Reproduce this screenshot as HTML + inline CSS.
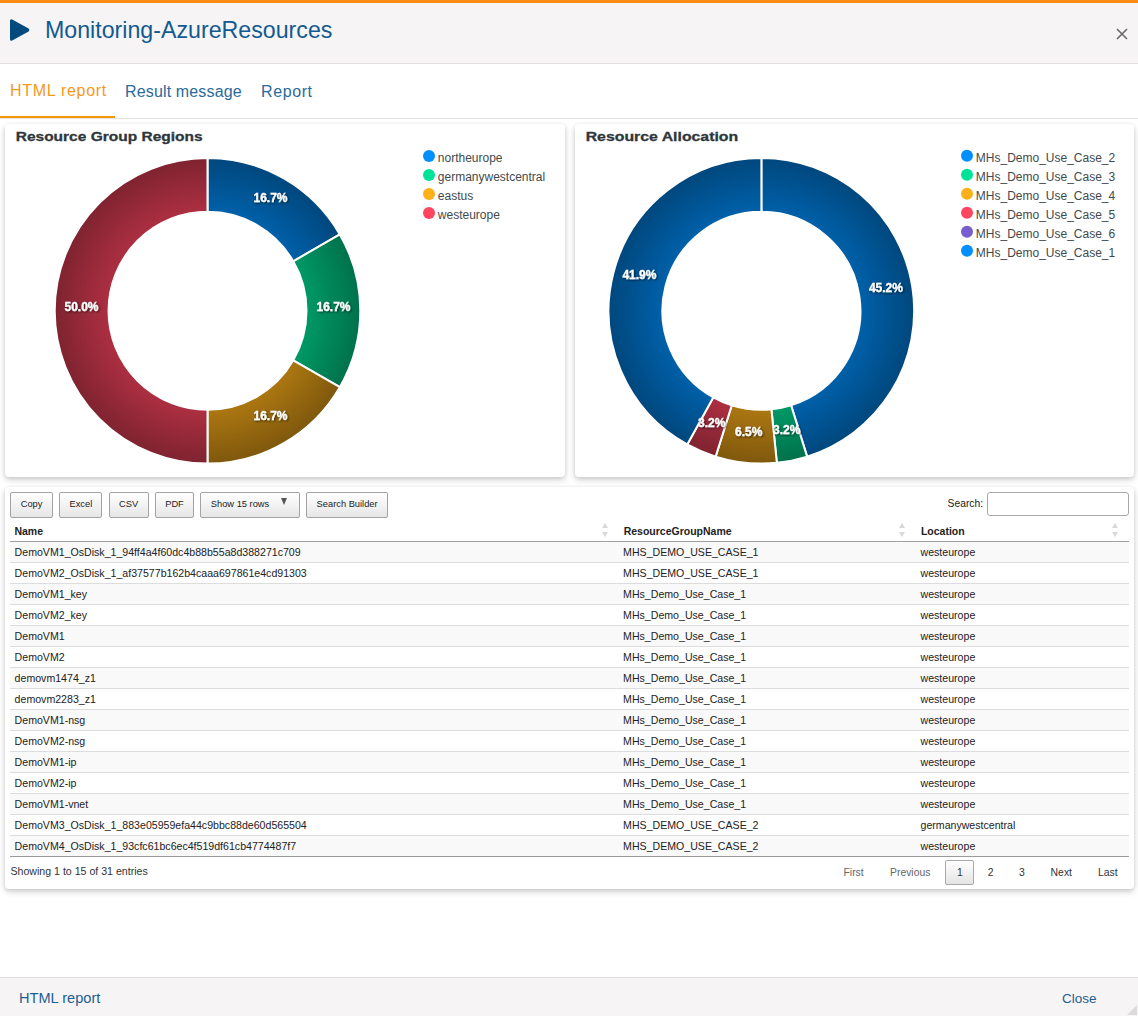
<!DOCTYPE html>
<html><head><meta charset="utf-8">
<style>
*{box-sizing:border-box}
html,body{margin:0;padding:0}
body{width:1138px;height:1016px;overflow:hidden;position:relative;background:#fff;font-family:"Liberation Sans",sans-serif;color:#333}
.abs{position:absolute;white-space:nowrap}
#topbar{left:0;top:0;width:1138px;height:3px;background:#ff8a14}
#header{left:0;top:3px;width:1138px;height:61px;background:#f6f4f4;border-bottom:1px solid #e2dede}
#title{left:45px;top:15px;font-size:23.2px;line-height:30px;color:#135a91}
#xclose{left:1114px;top:26px}
#tabs{left:0;top:64px;width:1138px;height:55px;background:#fff;border-bottom:1px solid #e8e3e3}
.tab{font-size:16px;line-height:20px;color:#2b6a9b}
#tab1{left:10px;top:81px;color:#f39a1b;letter-spacing:0.7px}
#tab2{left:125px;top:82px;letter-spacing:0.15px}
#tab3{left:261px;top:82px;letter-spacing:0.6px}
#tabline{left:0;top:116px;width:115px;height:2px;background:#f49806}
.card{position:absolute;background:#fff;border-radius:4px;box-shadow:0 3px 6px rgba(0,0,0,.16),0 1px 4px rgba(0,0,0,.1)}
#footer{left:0;top:977px;width:1138px;height:39px;background:#f6f4f4;border-top:1px solid #e2dede}
.foot{font-size:14.6px;line-height:18px;color:#1f5e90}
</style></head><body>
<div id="topbar" class="abs"></div>
<div id="header" class="abs"></div>
<svg class="abs" style="left:9px;top:18px" width="22" height="25" viewBox="0 0 22 25"><path d="M3.2 1.6 Q1 0.4 1 3 L1 21 Q1 23.6 3.2 22.4 L19.6 13.4 Q21.4 12 19.6 10.6 Z" fill="#034a7e"/></svg>
<div id="title" class="abs">Monitoring-AzureResources</div>
<svg id="xclose" class="abs" width="16" height="16" viewBox="0 0 16 16"><path d="M3 3 L13 13 M13 3 L3 13" stroke="#6a6a6a" stroke-width="1.6"/></svg>
<div id="tabs" class="abs"></div>
<div id="tab1" class="abs tab">HTML report</div>
<div id="tab2" class="abs tab">Result message</div>
<div id="tab3" class="abs tab">Report</div>
<div id="tabline" class="abs"></div>

<div class="card" style="left:5px;top:124px;width:560px;height:353px"></div>
<div class="card" style="left:575px;top:124px;width:559px;height:353px"></div>
<div class="card" style="left:5px;top:487px;width:1129px;height:402px"></div>

<!--CHARTS-->
<svg class="abs" style="left:0;top:0" width="1138" height="1016" viewBox="0 0 1138 1016">
<defs><filter id="ds" x="-20%" y="-40%" width="140%" height="180%"><feDropShadow dx="1" dy="1" stdDeviation="0.9" flood-color="#000" flood-opacity="0.65"/></filter>
<radialGradient id="g1_0" gradientUnits="userSpaceOnUse" cx="207.5" cy="310.8" r="152.8"><stop offset="0.0" stop-color="#008FFB"/><stop offset="1" stop-color="#00477d"/></radialGradient>
<radialGradient id="g1_1" gradientUnits="userSpaceOnUse" cx="207.5" cy="310.8" r="152.8"><stop offset="0.0" stop-color="#00E396"/><stop offset="1" stop-color="#00714b"/></radialGradient>
<radialGradient id="g1_2" gradientUnits="userSpaceOnUse" cx="207.5" cy="310.8" r="152.8"><stop offset="0.0" stop-color="#FEB019"/><stop offset="1" stop-color="#7f580d"/></radialGradient>
<radialGradient id="g1_3" gradientUnits="userSpaceOnUse" cx="207.5" cy="310.8" r="152.8"><stop offset="0.0" stop-color="#FF4560"/><stop offset="1" stop-color="#7f2330"/></radialGradient>
<radialGradient id="g2_0" gradientUnits="userSpaceOnUse" cx="761.4" cy="310.8" r="152.8"><stop offset="0.0" stop-color="#008FFB"/><stop offset="1" stop-color="#00477d"/></radialGradient>
<radialGradient id="g2_1" gradientUnits="userSpaceOnUse" cx="761.4" cy="310.8" r="152.8"><stop offset="0.0" stop-color="#00E396"/><stop offset="1" stop-color="#00714b"/></radialGradient>
<radialGradient id="g2_2" gradientUnits="userSpaceOnUse" cx="761.4" cy="310.8" r="152.8"><stop offset="0.0" stop-color="#FEB019"/><stop offset="1" stop-color="#7f580d"/></radialGradient>
<radialGradient id="g2_3" gradientUnits="userSpaceOnUse" cx="761.4" cy="310.8" r="152.8"><stop offset="0.0" stop-color="#FF4560"/><stop offset="1" stop-color="#7f2330"/></radialGradient>
<radialGradient id="g2_5" gradientUnits="userSpaceOnUse" cx="761.4" cy="310.8" r="152.8"><stop offset="0.0" stop-color="#008FFB"/><stop offset="1" stop-color="#00477d"/></radialGradient>
</defs>
<style>.dl{font:bold 12px "Liberation Sans",sans-serif;fill:#fff;stroke:#fff;stroke-width:0.3px;filter:url(#ds)}.lg{font:12px "Liberation Sans",sans-serif;fill:#43494b}.ct{font:bold 13.4px "Liberation Sans",sans-serif;fill:#2e363a;stroke:#2e363a;stroke-width:0.3px}</style>
<text x="15.7" y="140.8" class="ct" textLength="187" lengthAdjust="spacingAndGlyphs">Resource Group Regions</text>
<text x="585.7" y="140.8" class="ct" textLength="152.5" lengthAdjust="spacingAndGlyphs">Resource Allocation</text>
<path d="M207.50 158.00A152.80 152.80 0 0 1 339.83 234.40L293.24 261.30A99.00 99.00 0 0 0 207.50 211.80Z" fill="url(#g1_0)" stroke="#fff" stroke-width="2"/>
<path d="M339.83 234.40A152.80 152.80 0 0 1 339.83 387.20L293.24 360.30A99.00 99.00 0 0 0 293.24 261.30Z" fill="url(#g1_1)" stroke="#fff" stroke-width="2"/>
<path d="M339.83 387.20A152.80 152.80 0 0 1 207.50 463.60L207.50 409.80A99.00 99.00 0 0 0 293.24 360.30Z" fill="url(#g1_2)" stroke="#fff" stroke-width="2"/>
<path d="M207.50 463.60A152.80 152.80 0 0 1 207.50 158.00L207.50 211.80A99.00 99.00 0 0 0 207.50 409.80Z" fill="url(#g1_3)" stroke="#fff" stroke-width="2"/>
<path d="M761.40 158.00A152.80 152.80 0 0 1 807.14 456.59L791.04 405.26A99.00 99.00 0 0 0 761.40 211.80Z" fill="url(#g2_0)" stroke="#fff" stroke-width="2"/>
<path d="M807.14 456.59A152.80 152.80 0 0 1 776.86 462.82L771.42 409.29A99.00 99.00 0 0 0 791.04 405.26Z" fill="url(#g2_1)" stroke="#fff" stroke-width="2"/>
<path d="M776.86 462.82A152.80 152.80 0 0 1 715.66 456.59L731.76 405.26A99.00 99.00 0 0 0 771.42 409.29Z" fill="url(#g2_2)" stroke="#fff" stroke-width="2"/>
<path d="M715.66 456.59A152.80 152.80 0 0 1 687.25 444.40L713.36 397.36A99.00 99.00 0 0 0 731.76 405.26Z" fill="url(#g2_3)" stroke="#fff" stroke-width="2"/>
<path d="M687.25 444.40A152.80 152.80 0 0 1 761.40 158.00L761.40 211.80A99.00 99.00 0 0 0 713.36 397.36Z" fill="url(#g2_5)" stroke="#fff" stroke-width="2"/>
<text x="270.5" y="201.7" text-anchor="middle" class="dl">16.7%</text>
<text x="333.5" y="310.8" text-anchor="middle" class="dl">16.7%</text>
<text x="270.5" y="419.9" text-anchor="middle" class="dl">16.7%</text>
<text x="81.5" y="310.8" text-anchor="middle" class="dl">50.0%</text>
<text x="885.9" y="291.7" text-anchor="middle" class="dl">45.2%</text>
<text x="786.8" y="434.2" text-anchor="middle" class="dl">3.2%</text>
<text x="748.7" y="436.2" text-anchor="middle" class="dl">6.5%</text>
<text x="711.7" y="426.6" text-anchor="middle" class="dl">3.2%</text>
<text x="639.4" y="279.2" text-anchor="middle" class="dl">41.9%</text>
<circle cx="429" cy="156.0" r="6" fill="#008FFB"/>
<text x="437.8" y="162.2" class="lg">northeurope</text>
<circle cx="429" cy="175.0" r="6" fill="#00E396"/>
<text x="437.8" y="181.2" class="lg">germanywestcentral</text>
<circle cx="429" cy="194.0" r="6" fill="#FEB019"/>
<text x="437.8" y="200.2" class="lg">eastus</text>
<circle cx="429" cy="213.0" r="6" fill="#FF4560"/>
<text x="437.8" y="219.2" class="lg">westeurope</text>
<circle cx="967" cy="155.8" r="6" fill="#008FFB"/>
<text x="975.8" y="162.0" class="lg">MHs_Demo_Use_Case_2</text>
<circle cx="967" cy="174.8" r="6" fill="#00E396"/>
<text x="975.8" y="181.0" class="lg">MHs_Demo_Use_Case_3</text>
<circle cx="967" cy="193.8" r="6" fill="#FEB019"/>
<text x="975.8" y="200.0" class="lg">MHs_Demo_Use_Case_4</text>
<circle cx="967" cy="212.8" r="6" fill="#FF4560"/>
<text x="975.8" y="219.0" class="lg">MHs_Demo_Use_Case_5</text>
<circle cx="967" cy="231.8" r="6" fill="#775DD0"/>
<text x="975.8" y="238.0" class="lg">MHs_Demo_Use_Case_6</text>
<circle cx="967" cy="250.8" r="6" fill="#008FFB"/>
<text x="975.8" y="257.0" class="lg">MHs_Demo_Use_Case_1</text>
</svg>
<!--/CHARTS--><!--/CHARTS--><!--/CHARTS--><!--/CHARTS--><!--/CHARTS--><!--/CHARTS--><!--/CHARTS--><!--/CHARTS--><!--/CHARTS--><!--/CHARTS--><!--/CHARTS-->

<!--TABLE-->
<style>.btn{position:absolute;top:492px;height:26px;border:1px solid #a3a3a3;border-radius:2px;background:linear-gradient(#fff,#e6e6e6);}.bt{position:absolute;top:495.5px;font-size:9.3px;line-height:16px;color:#222;white-space:nowrap}.th{position:absolute;top:525px;font-size:10.5px;font-weight:bold;line-height:12px;color:#222;white-space:nowrap}.row{position:absolute;left:10px;width:1119px;height:21px;border-bottom:1px solid #ddd}.td{position:absolute;font-size:10.6px;line-height:12px;color:#222;white-space:nowrap}.pg{position:absolute;top:866px;font-size:10.4px;line-height:13px;color:#333;white-space:nowrap}.sort{position:absolute;width:0;height:0;border-left:3px solid transparent;border-right:3px solid transparent}</style>
<div class="btn" style="left:10px;width:43px"></div>
<div class="bt" style="left:20.7px">Copy</div>
<div class="btn" style="left:59px;width:43px"></div>
<div class="bt" style="left:69.5px">Excel</div>
<div class="btn" style="left:109px;width:40px"></div>
<div class="bt" style="left:119px">CSV</div>
<div class="btn" style="left:155px;width:39px"></div>
<div class="bt" style="left:165.2px">PDF</div>
<div class="btn" style="left:200px;width:100px"></div>
<div class="bt" style="left:210.8px">Show 15 rows</div>
<div class="btn" style="left:306px;width:82px"></div>
<div class="bt" style="left:316.6px">Search Builder</div>
<div class="sort" style="left:281px;top:498px;border-left-width:3.5px;border-right-width:3.5px;border-top:7px solid #555"></div>
<div class="td" style="left:947.6px;top:498px;font-size:10.3px">Search:</div>
<div style="position:absolute;left:987px;top:492px;width:142px;height:24px;border:1px solid #a9a9a9;border-radius:3px;background:#fff"></div>
<div class="th" style="left:14.4px">Name</div>
<div class="th" style="left:623.7px">ResourceGroupName</div>
<div class="th" style="left:920.9px">Location</div>
<div class="sort" style="left:602px;top:522.5px;border-bottom:5.5px solid #d8d8d8"></div>
<div class="sort" style="left:602px;top:532px;border-top:5.5px solid #d8d8d8"></div>
<div class="sort" style="left:899px;top:522.5px;border-bottom:5.5px solid #d8d8d8"></div>
<div class="sort" style="left:899px;top:532px;border-top:5.5px solid #d8d8d8"></div>
<div class="sort" style="left:1112px;top:522.5px;border-bottom:5.5px solid #d8d8d8"></div>
<div class="sort" style="left:1112px;top:532px;border-top:5.5px solid #d8d8d8"></div>
<div style="position:absolute;left:10px;top:541px;width:1119px;height:1px;background:#a0a0a0"></div>
<div class="row" style="top:542px;background:#f9f9f9;border-bottom-color:#ddd"></div>
<div class="td" style="left:14.6px;top:546px">DemoVM1_OsDisk_1_94ff4a4f60dc4b88b55a8d388271c709</div>
<div class="td" style="left:623.1px;top:546px">MHS_DEMO_USE_CASE_1</div>
<div class="td" style="left:920.5px;top:546px">westeurope</div>
<div class="row" style="top:563px;background:#fff;border-bottom-color:#ddd"></div>
<div class="td" style="left:14.6px;top:567px">DemoVM2_OsDisk_1_af37577b162b4caaa697861e4cd91303</div>
<div class="td" style="left:623.1px;top:567px">MHS_DEMO_USE_CASE_1</div>
<div class="td" style="left:920.5px;top:567px">westeurope</div>
<div class="row" style="top:584px;background:#f9f9f9;border-bottom-color:#ddd"></div>
<div class="td" style="left:14.6px;top:588px">DemoVM1_key</div>
<div class="td" style="left:623.1px;top:588px">MHs_Demo_Use_Case_1</div>
<div class="td" style="left:920.5px;top:588px">westeurope</div>
<div class="row" style="top:605px;background:#fff;border-bottom-color:#ddd"></div>
<div class="td" style="left:14.6px;top:609px">DemoVM2_key</div>
<div class="td" style="left:623.1px;top:609px">MHs_Demo_Use_Case_1</div>
<div class="td" style="left:920.5px;top:609px">westeurope</div>
<div class="row" style="top:626px;background:#f9f9f9;border-bottom-color:#ddd"></div>
<div class="td" style="left:14.6px;top:630px">DemoVM1</div>
<div class="td" style="left:623.1px;top:630px">MHs_Demo_Use_Case_1</div>
<div class="td" style="left:920.5px;top:630px">westeurope</div>
<div class="row" style="top:647px;background:#fff;border-bottom-color:#ddd"></div>
<div class="td" style="left:14.6px;top:651px">DemoVM2</div>
<div class="td" style="left:623.1px;top:651px">MHs_Demo_Use_Case_1</div>
<div class="td" style="left:920.5px;top:651px">westeurope</div>
<div class="row" style="top:668px;background:#f9f9f9;border-bottom-color:#ddd"></div>
<div class="td" style="left:14.6px;top:672px">demovm1474_z1</div>
<div class="td" style="left:623.1px;top:672px">MHs_Demo_Use_Case_1</div>
<div class="td" style="left:920.5px;top:672px">westeurope</div>
<div class="row" style="top:689px;background:#fff;border-bottom-color:#ddd"></div>
<div class="td" style="left:14.6px;top:693px">demovm2283_z1</div>
<div class="td" style="left:623.1px;top:693px">MHs_Demo_Use_Case_1</div>
<div class="td" style="left:920.5px;top:693px">westeurope</div>
<div class="row" style="top:710px;background:#f9f9f9;border-bottom-color:#ddd"></div>
<div class="td" style="left:14.6px;top:714px">DemoVM1-nsg</div>
<div class="td" style="left:623.1px;top:714px">MHs_Demo_Use_Case_1</div>
<div class="td" style="left:920.5px;top:714px">westeurope</div>
<div class="row" style="top:731px;background:#fff;border-bottom-color:#ddd"></div>
<div class="td" style="left:14.6px;top:735px">DemoVM2-nsg</div>
<div class="td" style="left:623.1px;top:735px">MHs_Demo_Use_Case_1</div>
<div class="td" style="left:920.5px;top:735px">westeurope</div>
<div class="row" style="top:752px;background:#f9f9f9;border-bottom-color:#ddd"></div>
<div class="td" style="left:14.6px;top:756px">DemoVM1-ip</div>
<div class="td" style="left:623.1px;top:756px">MHs_Demo_Use_Case_1</div>
<div class="td" style="left:920.5px;top:756px">westeurope</div>
<div class="row" style="top:773px;background:#fff;border-bottom-color:#ddd"></div>
<div class="td" style="left:14.6px;top:777px">DemoVM2-ip</div>
<div class="td" style="left:623.1px;top:777px">MHs_Demo_Use_Case_1</div>
<div class="td" style="left:920.5px;top:777px">westeurope</div>
<div class="row" style="top:794px;background:#f9f9f9;border-bottom-color:#ddd"></div>
<div class="td" style="left:14.6px;top:798px">DemoVM1-vnet</div>
<div class="td" style="left:623.1px;top:798px">MHs_Demo_Use_Case_1</div>
<div class="td" style="left:920.5px;top:798px">westeurope</div>
<div class="row" style="top:815px;background:#fff;border-bottom-color:#ddd"></div>
<div class="td" style="left:14.6px;top:819px">DemoVM3_OsDisk_1_883e05959efa44c9bbc88de60d565504</div>
<div class="td" style="left:623.1px;top:819px">MHS_DEMO_USE_CASE_2</div>
<div class="td" style="left:920.5px;top:819px">germanywestcentral</div>
<div class="row" style="top:836px;background:#f9f9f9;border-bottom-color:#9a9a9a"></div>
<div class="td" style="left:14.6px;top:840px">DemoVM4_OsDisk_1_93cfc61bc6ec4f519df61cb4774487f7</div>
<div class="td" style="left:623.1px;top:840px">MHS_DEMO_USE_CASE_2</div>
<div class="td" style="left:920.5px;top:840px">westeurope</div>
<div class="td" style="left:10.5px;top:865px;color:#333">Showing 1 to 15 of 31 entries</div>
<div style="position:absolute;left:945px;top:860px;width:29px;height:25px;border:1px solid #a8a8a8;border-radius:2px;background:linear-gradient(#fff,#e4e4e4)"></div>
<div class="pg" style="left:843.5px;color:#666">First</div>
<div class="pg" style="left:890px;color:#666">Previous</div>
<div class="pg" style="left:956.9px;color:#333">1</div>
<div class="pg" style="left:987.8px;color:#333">2</div>
<div class="pg" style="left:1019.1px;color:#333">3</div>
<div class="pg" style="left:1050.6px;color:#333">Next</div>
<div class="pg" style="left:1098px;color:#333">Last</div>
<!--/TABLE--><!--/TABLE--><!--/TABLE--><!--/TABLE-->

<div id="footer" class="abs"></div>
<div class="abs foot" style="left:19px;top:989px">HTML report</div>
<div class="abs foot" style="left:1062px;top:990px;font-size:13.5px">Close</div>
<svg class="abs" style="left:1126px;top:1004px" width="12" height="12"><path d="M11 1 L11 11 L1 11 Z" fill="#dcdcdc"/></svg>
</body></html>
